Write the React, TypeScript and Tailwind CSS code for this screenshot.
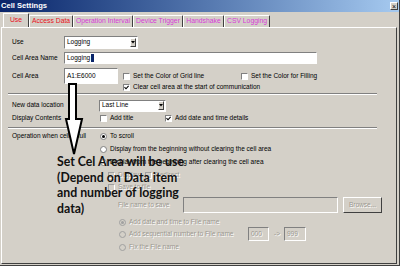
import React from "react";

const Check = ({ checked = false, disabled = false }: { checked?: boolean; disabled?: boolean }) => (
  <span
    className={
      disabled
        ? "relative inline-block w-[7px] h-[7px] shrink-0 border border-t-[#a0a0a0] border-l-[#a0a0a0] border-b-white border-r-white bg-[#d4d0c8]"
        : "relative inline-block w-[7px] h-[7px] shrink-0 border border-t-[#808080] border-l-[#808080] border-b-white border-r-white bg-white"
    }
  >
    {checked && (
      <svg className="absolute left-0 top-0 w-[5px] h-[5px]" viewBox="0 0 5 5">
        <path d="M0.5 2.2 L2 3.8 L4.6 0.8" stroke="#000" strokeWidth="1.1" fill="none" />
      </svg>
    )}
  </span>
);

const Radio = ({ on = false, disabled = false }: { on?: boolean; disabled?: boolean }) => (
  <span
    className={
      disabled
        ? "relative inline-flex items-center justify-center w-[7px] h-[7px] shrink-0 rounded-full border border-[#a0a0a0] bg-[#d4d0c8]"
        : "relative inline-flex items-center justify-center w-[7px] h-[7px] shrink-0 rounded-full border border-[#808080] bg-white"
    }
  >
    {on && (
      <span className={disabled ? "w-[3px] h-[3px] rounded-full bg-[#a0a0a0]" : "w-[3px] h-[3px] rounded-full bg-black"} />
    )}
  </span>
);

const Select = ({ value, className }: { value: string; className: string }) => (
  <div
    className={`flex items-center bg-white border border-t-[#808080] border-l-[#808080] border-b-white border-r-white ${className}`}
  >
    <span className="flex-1 pl-[2px]">{value}</span>
    <span className="flex items-center justify-center w-[6px] h-[9px] mr-[1px] bg-[#d4d0c8] border border-t-white border-l-white border-b-[#404040] border-r-[#404040]">
      <svg className="w-[4px] h-[3px]" viewBox="0 0 4 3">
        <path d="M0 0 H4 L2 2.5 Z" fill="#000" />
      </svg>
    </span>
  </div>
);

const tabs = [
  { label: "Use", w: "w-[26px]", color: "text-[#e8101c]", active: true },
  { label: "Access Data", w: "w-[44px]", color: "text-[#e8101c]" },
  { label: "Operation Interval", w: "w-[60px]", color: "text-[#d83ad8]" },
  { label: "Device Trigger", w: "w-[50px]", color: "text-[#d83ad8]" },
  { label: "Handshake", w: "w-[41px]", color: "text-[#d83ad8]" },
  { label: "CSV Logging", w: "w-[46px]", color: "text-[#d83ad8]" },
];

const dis = "text-[#9a978f] [text-shadow:1px_1px_0_#ffffff]";

export default function App() {
  return (
    <div className="relative w-[400px] h-[266px] overflow-hidden flex flex-col bg-[#d4d0c8] border-r border-b border-[#404040] font-['Liberation_Sans',Arial,sans-serif] text-[6.5px] leading-none text-black">
      {/* Title bar */}
      <div className="h-[12px] shrink-0 flex items-center justify-between bg-linear-to-r from-[#0a246a] to-[#a6caf0] pl-[1px] pr-[1px]">
        <span className="text-white font-bold text-[7.6px]">Cell Settings</span>
        <span className="flex items-center justify-center w-[8px] h-[8px] bg-[#d4d0c8] border border-t-white border-l-white border-b-[#404040] border-r-[#404040] text-[7px]">
          ×
        </span>
      </div>

      {/* Tabs */}
      <div className="h-[15px] shrink-0 flex items-end pl-[3px]">
        {tabs.map((t) => (
          <div
            key={t.label}
            className={`${t.w} ${t.color} ${
              t.active ? "h-[14px]" : "h-[12px]"
            } flex items-center justify-center text-[6.8px] border-t border-l border-r border-t-white border-l-white border-r-[#404040] rounded-t-[1px]`}
          >
            {t.label}
          </div>
        ))}
      </div>

      {/* Panel */}
      <div className="flex-1 ml-[1px] mr-[2px] mb-[1px] flex flex-col pl-[6px] border border-t-white border-l-white border-r-[#404040] border-b-[#404040]">
        <div className="mt-[8px] h-[13px] flex items-center pl-[4px]">
          <span className="w-[52px]">Use</span>
          <Select value="Logging" className="w-[74px] h-[13px]" />
        </div>

        <div className="mt-[3px] h-[12px] flex items-center pl-[4px]">
          <span className="w-[52px]">Cell Area Name</span>
          <div className="w-[253px] h-[12px] flex items-center pl-[2px] bg-white border border-t-[#808080] border-l-[#808080] border-b-white border-r-white">
            Logging
            <span className="inline-block w-[3px] h-[8px] ml-[1px] bg-[#0a246a]" />
          </div>
        </div>

        <div className="mt-[4px] h-[25px] flex items-start pl-[4px]">
          <span className="w-[52px] h-[16px] flex items-center">Cell Area</span>
          <div className="w-[54px] h-[16px] flex items-center pl-[2px] bg-white border border-t-[#808080] border-l-[#808080] border-b-white border-r-white">
            A1:E6000
          </div>
          <div className="ml-[5px] pt-[3px] flex flex-col">
            <div className="h-[11px] flex items-center">
              <div className="w-[118px] flex items-center gap-[3px]">
                <Check />
                <span>Set the Color of Grid line</span>
              </div>
              <div className="flex items-center gap-[3px]">
                <Check />
                <span>Set the Color for Filling</span>
              </div>
            </div>
            <div className="h-[11px] flex items-center gap-[3px]">
              <Check checked />
              <span>Clear cell area at the start of communication</span>
            </div>
          </div>
        </div>

        <div className="w-[369px] h-[2px] border-t border-b border-t-[#808080] border-b-white" />

        <div className="mt-[5px] h-[11px] flex items-center pl-[4px]">
          <span className="w-[87px]">New data location</span>
          <Select value="Last Line" className="w-[67px] h-[12px]" />
        </div>

        <div className="mt-[2px] h-[10px] flex items-center pl-[4px]">
          <span className="w-[88px]">Display Contents</span>
          <div className="w-[65px] flex items-center gap-[3px]">
            <Check />
            <span>Add title</span>
          </div>
          <div className="flex items-center gap-[3px]">
            <Check checked />
            <span>Add date and time details</span>
          </div>
        </div>

        <div className="mt-[4px] w-[369px] h-[2px] border-t border-b border-t-[#808080] border-b-white" />

        <div className="mt-[1px] flex items-start pl-[4px]">
          <span className="w-[88px] h-[13px] flex items-center">Operation when cell is full</span>
          <div className="flex flex-col">
            <div className="h-[13px] flex items-center gap-[3px]">
              <Radio on />
              <span>To scroll</span>
            </div>
            <div className="h-[13px] flex items-center gap-[3px]">
              <Radio />
              <span>Display from the beginning without clearing the cell area</span>
            </div>
            <div className="h-[13px] flex items-center gap-[3px]">
              <Radio />
              <span>Display from the beginning after clearing the cell area</span>
            </div>

            <div className={`h-[12px] flex items-center pl-[8px] ${dis}`}>
              <div className="w-[37px] flex items-center gap-[3px]">
                <Check disabled />
                <span>Display</span>
              </div>
              <div className="flex items-center gap-[3px]">
                <Check disabled />
                <span>Redirect</span>
              </div>
            </div>
            <div className={`h-[12px] flex items-center gap-[3px] pl-[8px] ${dis}`}>
              <Check disabled />
              <span>Save to file</span>
            </div>

            <div className="mt-[4px] h-[16px] flex items-center pl-[18px]">
              <span className={`w-[65px] ${dis}`}>File name to save</span>
              <div className="w-[155px] h-[16px] bg-[#d4d0c8] border border-t-[#808080] border-l-[#808080] border-b-white border-r-white" />
              <div
                className={`ml-[5px] w-[39px] h-[16px] flex items-center justify-center border border-t-white border-l-white border-b-[#404040] border-r-[#404040] ${dis}`}
              >
                Browse...
              </div>
            </div>

            <div className={`mt-[3px] h-[12px] flex items-center gap-[3px] pl-[19px] ${dis}`}>
              <Radio on disabled />
              <span>Add date and time to File name</span>
            </div>
            <div className={`h-[12px] flex items-center pl-[19px] ${dis}`}>
              <div className="w-[129px] flex items-center gap-[3px]">
                <Radio disabled />
                <span>Add sequential number to File name</span>
              </div>
              <div className="w-[21px] h-[14px] flex items-center pl-[2px] border border-t-[#808080] border-l-[#808080] border-b-white border-r-white">
                000
              </div>
              <span className="ml-[5px] w-[10px]">-&gt;</span>
              <div className="w-[22px] h-[14px] flex items-center pl-[2px] border border-t-[#808080] border-l-[#808080] border-b-white border-r-white">
                999
              </div>
            </div>
            <div className={`mt-[1px] h-[12px] flex items-center gap-[3px] pl-[19px] ${dis}`}>
              <Radio disabled />
              <span>Fix the File name</span>
            </div>
          </div>
        </div>
      </div>

      {/* Annotation overlay */}
      <svg className="absolute left-[62px] top-[82px] w-[24px] h-[76px]" viewBox="62 82 24 76">
        <path d="M69 84 H76 V119 H82 L74 154 L66 119 H69 Z" stroke="#000" strokeWidth="2" fill="#ffffff" strokeLinejoin="miter" />
      </svg>
      <div className="absolute left-[57px] top-[154px] font-['Lato',sans-serif] font-bold text-[12.3px] leading-[15.7px] text-[#111]">
        <div>Set Cel Area will be use</div>
        <div>(Depend on Data item</div>
        <div>and number of logging</div>
        <div>data)</div>
      </div>
    </div>
  );
}
